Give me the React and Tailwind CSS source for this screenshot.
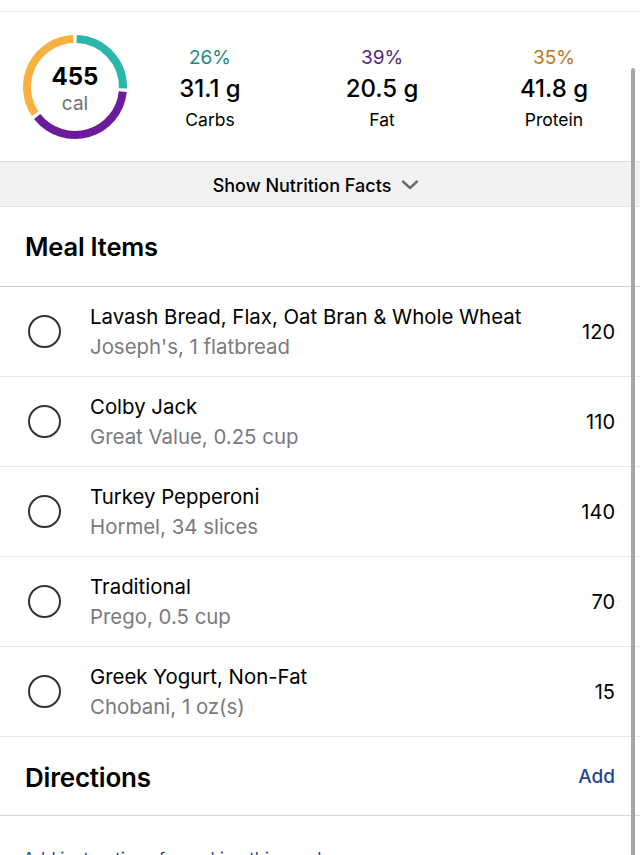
import React from "react";

const items = [
  { name: "Lavash Bread, Flax, Oat Bran & Whole Wheat", sub: "Joseph's, 1 flatbread", cal: 120 },
  { name: "Colby Jack", sub: "Great Value, 0.25 cup", cal: 110 },
  { name: "Turkey Pepperoni", sub: "Hormel, 34 slices", cal: 140 },
  { name: "Traditional", sub: "Prego, 0.5 cup", cal: 70 },
  { name: "Greek Yogurt, Non-Fat", sub: "Chobani, 1 oz(s)", cal: 15 },
];

function arc(cx, cy, r, a0, a1) {
  const rad = (a) => ((a - 90) * Math.PI) / 180;
  const x0 = cx + r * Math.cos(rad(a0));
  const y0 = cy + r * Math.sin(rad(a0));
  const x1 = cx + r * Math.cos(rad(a1));
  const y1 = cy + r * Math.sin(rad(a1));
  const large = a1 - a0 > 180 ? 1 : 0;
  return `M ${x0} ${y0} A ${r} ${r} 0 ${large} 1 ${x1} ${y1}`;
}

function Donut() {
  const g = 2;
  const segs = [
    { a0: 0, a1: 93.6, c: "#2ab7a9" },
    { a0: 93.6, a1: 234, c: "#6b1c9c" },
    { a0: 234, a1: 360, c: "#f8b13f" },
  ];
  return (
    <div className="relative w-[106px] h-[106px] shrink-0">
      <svg width="106" height="106" viewBox="0 0 106 106" className="absolute inset-0">
        {segs.map((s, i) => (
          <path key={i} d={arc(53, 53, 48, s.a0 + g, s.a1 - g)} fill="none" stroke={s.c} strokeWidth="8" />
        ))}
      </svg>
      <div className="absolute inset-0 flex flex-col items-center pt-[30px]">
        <div className="text-[24px] leading-[26px] font-bold text-black">455</div>
        <div className="text-[19px] leading-[22px] text-[#6e6e73] mt-[3px]">cal</div>
      </div>
    </div>
  );
}

function Macro({ pct, color, grams, label }) {
  return (
    <div className="flex flex-col items-center w-[120px]">
      <div className={`text-[19px] leading-[20px] ${color}`}>{pct}</div>
      <div className="text-[24px] leading-[28px] font-medium text-black mt-[7px]">{grams}</div>
      <div className="text-[17.5px] leading-[20px] text-black mt-[7px]">{label}</div>
    </div>
  );
}

export default function App() {
  return (
    <div className="relative w-[640px] h-[855px] overflow-hidden bg-white font-['Inter',sans-serif] text-black">
      <div className="h-[12px] border-b border-[#e8e8e8]" />
      {/* summary */}
      <div className="h-[150px] flex items-center pl-[22px] border-b border-[#dcdcdc]">
        <Donut />
        <div className="flex items-start pt-[4px]">
          <div className="ml-[22px]"><Macro pct="26%" color="text-[#1b8a79]" grams="31.1 g" label="Carbs" /></div>
          <div className="ml-[52px]"><Macro pct="39%" color="text-[#55237e]" grams="20.5 g" label="Fat" /></div>
          <div className="ml-[52px]"><Macro pct="35%" color="text-[#bd7420]" grams="41.8 g" label="Protein" /></div>
        </div>
      </div>
      {/* show nutrition facts */}
      <div className="h-[45px] bg-[#f2f2f4] border-b border-[#e3e3e6] flex items-center justify-center gap-[10px] pr-[8px] pt-[2px]">
        <span className="text-[18px] font-medium">Show Nutrition Facts</span>
        <svg width="18" height="12" viewBox="0 0 18 12" fill="none">
          <path d="M2 2.5 L9 9 L16 2.5" stroke="#6b6b6b" strokeWidth="2.4" strokeLinecap="round" strokeLinejoin="round" />
        </svg>
      </div>
      {/* meal items header */}
      <div className="h-[80px] flex items-center px-[25px] pt-[1px] border-b border-[#cfcfd2]">
        <span className="text-[25.5px] font-semibold tracking-[-0.2px]">Meal Items</span>
      </div>
      {items.map((it, i) => (
        <div key={i} className="h-[90px] flex items-center border-b border-[#e6e6e8] pr-[25px]">
          <div className="w-[90px] shrink-0 flex justify-center pr-[2px]">
            <div className="w-[33px] h-[33px] rounded-full border-[2.5px] border-[#333]" />
          </div>
          <div className="flex-1 flex flex-col">
            <div className="text-[20.4px] leading-[24px] text-black">{it.name}</div>
            <div className="text-[20.4px] leading-[24px] text-[#7a7a7e] mt-[6px]">{it.sub}</div>
          </div>
          <div className="text-[20px] text-black">{it.cal}</div>
        </div>
      ))}
      {/* directions */}
      <div className="h-[79px] flex items-center justify-between px-[25px] pt-[3px] border-b border-[#d6d6d8]">
        <span className="text-[26px] font-semibold tracking-[-0.2px]">Directions</span>
        <span className="text-[19px] font-medium text-[#1c4592]">Add</span>
      </div>
      <div className="px-[23px] pt-[31px] text-[17px] leading-[24px] text-[#1c4592]">Add instructions for making this meal</div>
      {/* scrollbar */}
      <div className="absolute left-[631px] top-[68px] w-[4px] h-[800px] rounded-t-full bg-[#a6a6a6]" />
    </div>
  );
}
